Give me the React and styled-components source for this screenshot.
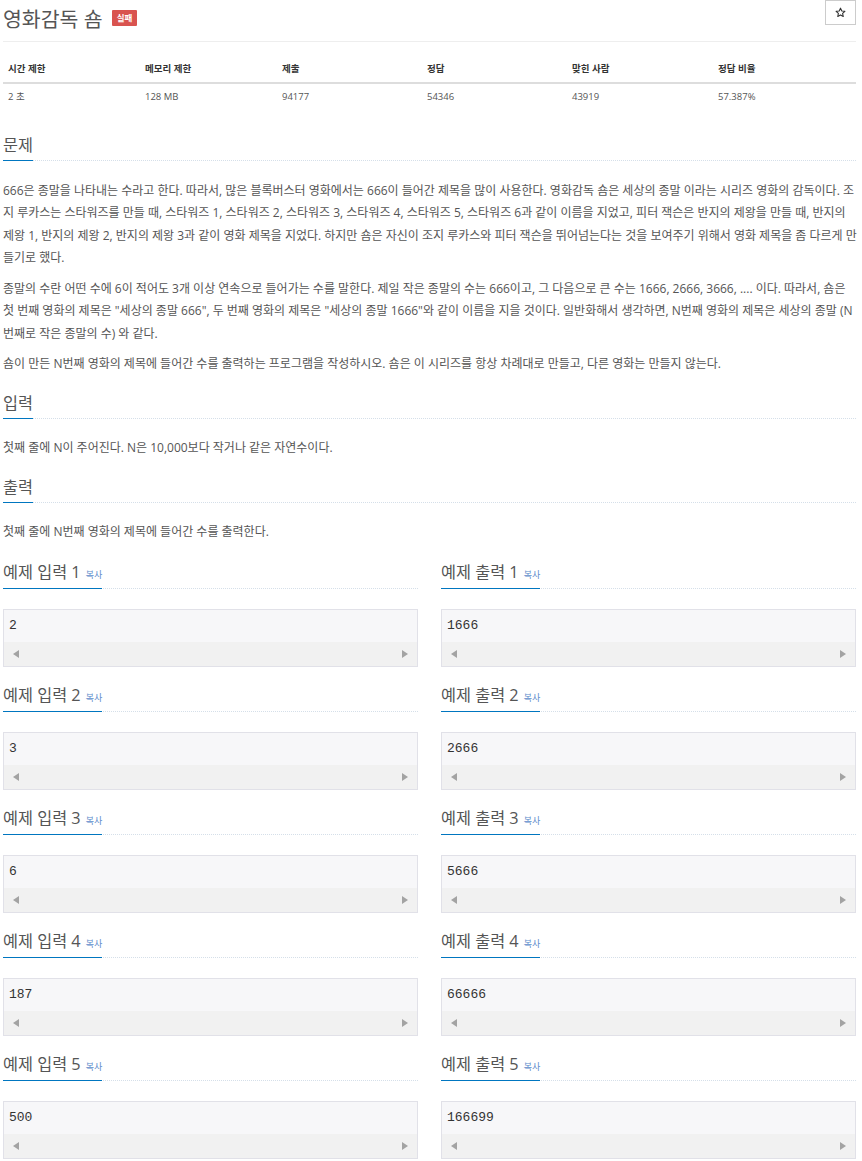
import React from 'react'
import styled, { createGlobalStyle } from 'styled-components'

const Global = createGlobalStyle`
  body {
    margin: 0;
    background: #fff;
    font-family: "Open Sans", "Noto Sans CJK KR", sans-serif;
    color: #555;
  }
`

let Page = styled.div`
  padding: 0 6px 0 3px;
`

let Header = styled.div`
  height: 41px;
  border-bottom: 1px solid #eee;
  display: flex;
  justify-content: space-between;
  align-items: flex-start;
`

let Title = styled.h1`
  margin: 0;
  display: flex;
  align-items: center;
  height: 36px;
  font-size: 20.5px;
  font-weight: 400;
  color: #555;
`

let Badge = styled.span`
  margin-left: 9px;
  background-color: #d9534f;
  color: #fff;
  font-size: 8.5px;
  font-weight: bold;
  padding: 0 5px;
  height: 16px;
  line-height: 16px;
  border-radius: 1px;
`

let StarButton = styled.button`
  width: 31px;
  height: 25px;
  border: 1px solid #ccc;
  background: #fff;
  padding: 0;
  display: flex;
  align-items: center;
  justify-content: center;
  color: #333;
`

let Table = styled.div`
  margin: 14px 0 25px;
  display: grid;
  grid-template-columns: 137px 137px 145px 145px 146px 1fr;
  font-size: 9.5px;
`

let Th = styled.div`
  height: 26px;
  line-height: 26px;
  padding-left: 5px;
  font-weight: bold;
  color: #333;
  border-bottom: 2px solid #ddd;
`

let Td = styled.div`
  height: 26px;
  line-height: 26px;
  padding-left: 5px;
  color: #555;
`

let Section = styled.section`
  margin-top: ${p => (p.first ? '0' : '17px')};
`

let Headline = styled.div`
  border-bottom: 1px dotted #d5dfe9;
  margin-bottom: ${p => (p.sample ? '20px' : '18.5px')};
  display: flex;
`

let HeadText = styled.h2`
  margin: 0 0 -1px;
  padding-bottom: ${p => (p.sample ? '6px' : '5px')};
  border-bottom: 1px solid #0076c0;
  font-size: 16.3px;
  line-height: 20px;
  font-weight: 400;
  color: #555;
  display: flex;
  align-items: baseline;
`

let Copy = styled.span`
  margin-left: 5px;
  font-size: 9px;
  line-height: 1;
  color: #5d8ccb;
`

let P = styled.p`
  margin: 0 0 8px;
  font-size: 12px;
  line-height: 22.5px;
`

let Line = styled.span`
  display: block;
  white-space: nowrap;
`

let Samples = styled.div`
  display: grid;
  grid-template-columns: 415px 415px;
  column-gap: 23px;
  margin-top: 18px;
`

let SampleCell = styled.div`
  margin-bottom: 18px;
`

let Box = styled.div`
  border: 1px solid #e1e1e8;
  background: #f7f7f9;
`

let Pre = styled.div`
  height: 32px;
  line-height: 32px;
  padding-left: 5px;
  font-family: "Liberation Mono", "DejaVu Sans Mono", monospace;
  font-size: 13px;
  color: #333;
`

let Scroll = styled.div`
  height: 24px;
  background: #f1f1f1;
  display: flex;
  justify-content: space-between;
  align-items: center;
  padding: 0 9px;
`

let Arrow = styled.span`
  width: 0;
  height: 0;
  border-top: 4.5px solid transparent;
  border-bottom: 4.5px solid transparent;
  ${p => (p.right ? 'border-left: 6px solid #a3a3a3;' : 'border-right: 6px solid #a3a3a3;')}
`

const info = [
  ['시간 제한', '2 초'],
  ['메모리 제한', '128 MB'],
  ['제출', '94177'],
  ['정답', '54346'],
  ['맞힌 사람', '43919'],
  ['정답 비율', '57.387%'],
]

const samples = [
  ['2', '1666'],
  ['3', '2666'],
  ['6', '5666'],
  ['187', '66666'],
  ['500', '166699'],
]

// the problem text, broken where the original page wraps
const para1 = [
  '666은 종말을 나타내는 수라고 한다. 따라서, 많은 블록버스터 영화에서는 666이 들어간 제목을 많이 사용한다. 영화감독 숌은 세상의 종말 이라는 시리즈 영화의 감독이다. 조',
  '지 루카스는 스타워즈를 만들 때, 스타워즈 1, 스타워즈 2, 스타워즈 3, 스타워즈 4, 스타워즈 5, 스타워즈 6과 같이 이름을 지었고, 피터 잭슨은 반지의 제왕을 만들 때, 반지의',
  '제왕 1, 반지의 제왕 2, 반지의 제왕 3과 같이 영화 제목을 지었다. 하지만 숌은 자신이 조지 루카스와 피터 잭슨을 뛰어넘는다는 것을 보여주기 위해서 영화 제목을 좀 다르게 만',
  '들기로 했다.',
]

const para2 = [
  '종말의 수란 어떤 수에 6이 적어도 3개 이상 연속으로 들어가는 수를 말한다. 제일 작은 종말의 수는 666이고, 그 다음으로 큰 수는 1666, 2666, 3666, .... 이다. 따라서, 숌은',
  '첫 번째 영화의 제목은 "세상의 종말 666", 두 번째 영화의 제목은 "세상의 종말 1666"와 같이 이름을 지을 것이다. 일반화해서 생각하면, N번째 영화의 제목은 세상의 종말 (N',
  '번째로 작은 종말의 수) 와 같다.',
]

function Heading({ children, sample }) {
  return (
    <Headline sample={sample}>
      <HeadText sample={sample}>{children}</HeadText>
    </Headline>
  )
}

function Lines({ lines }) {
  return <P>{lines.map((l, i) => <Line key={i}>{l}</Line>)}</P>
}

function Sample({ label, value }) {
  return (
    <SampleCell>
      <Heading sample>
        {label}
        <Copy>복사</Copy>
      </Heading>
      <Box>
        <Pre>{value}</Pre>
        <Scroll>
          <Arrow />
          <Arrow right />
        </Scroll>
      </Box>
    </SampleCell>
  )
}

export default function App() {
  return (
    <Page>
      <Global />
      <Header>
        <Title>
          영화감독 숌
          <Badge>실패</Badge>
        </Title>
        <StarButton>
          <svg width="11" height="11" viewBox="0 0 24 24" fill="none" stroke="#333" strokeWidth="2.4" strokeLinejoin="round">
            <path d="M12 2.5l2.9 6.2 6.7.7-5 4.6 1.4 6.7L12 17.3l-6 3.4 1.4-6.7-5-4.6 6.7-.7z" />
          </svg>
        </StarButton>
      </Header>

      <Table>
        {info.map(([h]) => <Th key={h}>{h}</Th>)}
        {info.map(([h, v]) => <Td key={h}>{v}</Td>)}
      </Table>

      <Section first>
        <Heading>문제</Heading>
        <Lines lines={para1} />
        <Lines lines={para2} />
        <P>숌이 만든 N번째 영화의 제목에 들어간 수를 출력하는 프로그램을 작성하시오. 숌은 이 시리즈를 항상 차례대로 만들고, 다른 영화는 만들지 않는다.</P>
      </Section>

      <Section>
        <Heading>입력</Heading>
        <P>첫째 줄에 N이 주어진다. N은 10,000보다 작거나 같은 자연수이다.</P>
      </Section>

      <Section>
        <Heading>출력</Heading>
        <P>첫째 줄에 N번째 영화의 제목에 들어간 수를 출력한다.</P>
      </Section>

      <Samples>
        {samples.map(([i, o], n) => (
          <React.Fragment key={n}>
            <Sample label={`예제 입력 ${n + 1}`} value={i} />
            <Sample label={`예제 출력 ${n + 1}`} value={o} />
          </React.Fragment>
        ))}
      </Samples>
    </Page>
  )
}
